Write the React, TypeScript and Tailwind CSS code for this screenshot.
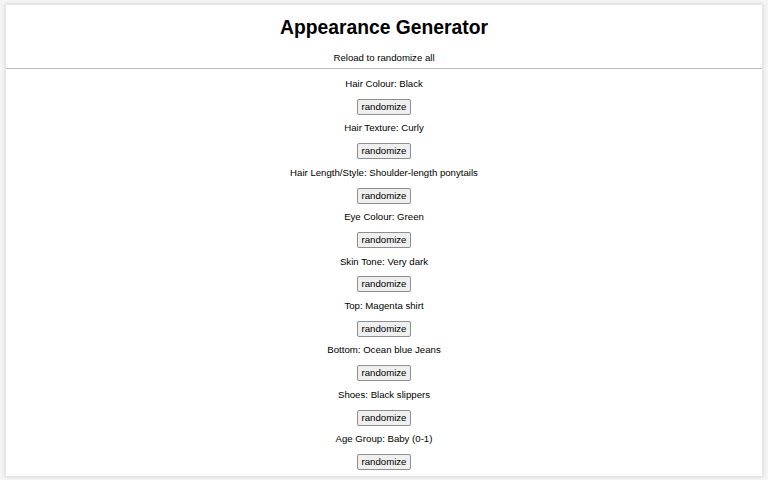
const traits: [string, string][] = [
  ['Hair Colour', 'Black'],
  ['Hair Texture', 'Curly'],
  ['Hair Length/Style', 'Shoulder-length ponytails'],
  ['Eye Colour', 'Green'],
  ['Skin Tone', 'Very dark'],
  ['Top', 'Magenta shirt'],
  ['Bottom', 'Ocean blue Jeans'],
  ['Shoes', 'Black slippers'],
  ['Age Group', 'Baby (0-1)'],
];

export default function App() {
  return (
    <div className="h-[480px] overflow-hidden bg-[#f4f4f4] px-[5px] pt-[4px] font-['Liberation_Sans',Arial,sans-serif] text-black">
      <div className="bg-white shadow-[0_0_3px_rgba(0,0,0,0.15)] border border-[#e6e6e6]">
        <header className="flex flex-col items-center pt-[11px]">
          <h1 className="text-[19.3px] font-bold leading-[24px]">Appearance Generator</h1>
          <p className="mt-[11px] text-[9.65px] leading-[14px]">Reload to randomize all</p>
        </header>
        <hr className="mt-[3px] border-0 border-t border-[#bdbdbd]" />
        <div className="flex flex-col items-center pt-[7px]">
          {traits.map(([name, value]) => (
            <div key={name} className="flex flex-col items-center">
              <div className="text-[9.65px] leading-[15px]">
                {name}: {value}
              </div>
              <button className="mt-[7.8px] mb-[5.6px] h-[16px] rounded-[2px] border border-[#8f8f8f] bg-[#efefef] px-[4px] text-[9.65px] leading-[14px]">
                randomize
              </button>
            </div>
          ))}
        </div>
      </div>
    </div>
  );
}
